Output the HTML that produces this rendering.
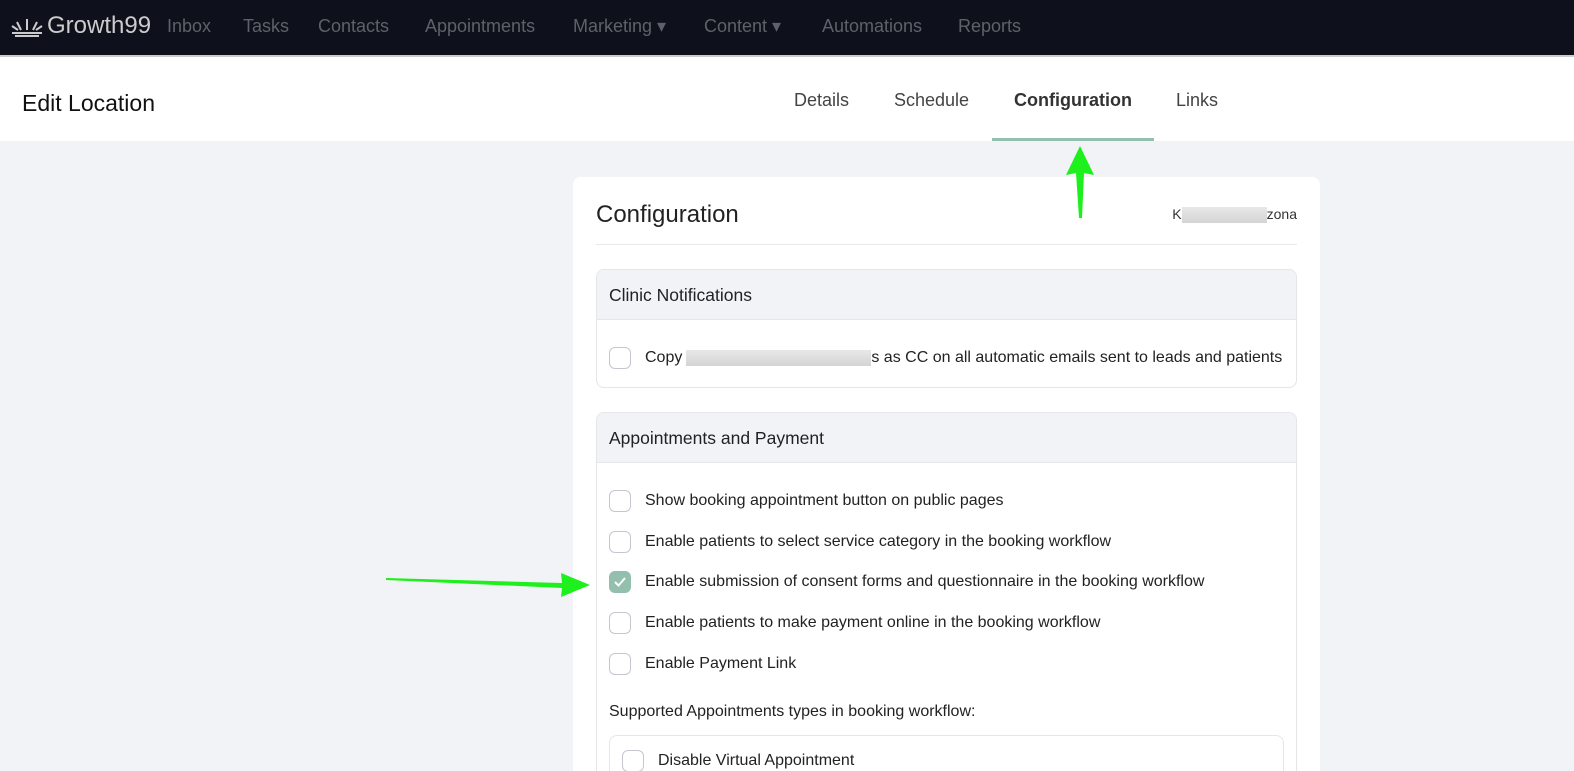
<!DOCTYPE html>
<html><head><meta charset="utf-8"><style>
*{box-sizing:border-box;margin:0;padding:0}
html,body{width:1574px;height:771px;overflow:hidden}
body{background:#f2f3f6;font-family:"Liberation Sans",sans-serif;color:#222;position:relative}
.nav{height:57px;background:#0e111b;position:relative;border-bottom:2px solid #ccc}
.logo{position:absolute;left:10px;top:12px;display:flex;align-items:center;color:#ccc;font-size:24px}
.nav a{position:absolute;top:16px;color:#5d6168;font-size:18px;text-decoration:none}
.hdr{height:84px;background:#fff;position:relative}
.hdr h1{position:absolute;left:22px;top:33px;font-size:23px;font-weight:normal;color:#111}
.tab{position:absolute;top:33px;font-size:18px;color:#444}
.card{position:absolute;left:573px;top:177px;width:747px;height:594px;background:#fff;border-radius:8px 8px 0 0;overflow:hidden}
.title{position:absolute;left:23px;top:24px;font-size:24px;color:#222}
.loc{position:absolute;right:23px;top:29px;font-size:14px;color:#333}
.hr{position:absolute;left:23px;right:23px;top:67px;border-top:1px solid #e8e9ec}
.sec{position:absolute;left:23px;right:23px;border:1px solid #e4e6ea;border-radius:8px;overflow:hidden}
.sh{background:#f2f3f7;height:50px;padding:15px 12px;font-size:17.5px;color:#222;border-bottom:1px solid #e4e6ea}
.row{position:absolute;left:12px;display:flex;align-items:center;font-size:16px;color:#222;white-space:nowrap}
.cb{width:22px;height:22px;border:1.5px solid #c4c7cf;border-radius:6px;margin-right:14px;background:#fff;flex:none}
.cb.on{background:#92bfae;border-color:#92bfae;display:flex;align-items:center;justify-content:center}
.blur{display:inline-block;background:linear-gradient(#e8e8e8,#d4d4d4);height:16px;vertical-align:middle}
</style></head><body>
<div class="nav">
<div class="logo"><svg width="34" height="22" viewBox="0 0 34 22"><g stroke="#ccc" stroke-width="2" fill="none"><path d="M2 18h30M5 21h24"/><path d="M17 15V4M11 15L7 7M23 15l4-8M8 15L2 11M26 15l6-4"/></g></svg><span style="margin-left:3px">Growth99</span></div>
<a style="left:167px">Inbox</a><a style="left:243px">Tasks</a><a style="left:318px">Contacts</a><a style="left:425px">Appointments</a><a style="left:573px">Marketing ▾</a><a style="left:704px">Content ▾</a><a style="left:822px">Automations</a><a style="left:958px">Reports</a>
</div>
<div class="hdr"><h1>Edit Location</h1>
<span class="tab" style="left:794px">Details</span>
<span class="tab" style="left:894px">Schedule</span>
<span class="tab" style="left:1014px;font-weight:bold;color:#333">Configuration</span>
<span class="tab" style="left:1176px">Links</span>
<div style="position:absolute;left:992px;width:162px;top:81px;height:3px;background:#92bfae"></div>
</div>
<div class="card">
<div class="title">Configuration</div>
<div class="loc">K<span class="blur" style="width:85px"></span>zona</div>
<div class="hr"></div>
<div class="sec" style="top:92px;height:119px"><div class="sh">Clinic Notifications</div>
<div class="row" style="top:77px"><div class="cb"></div>Copy <span class="blur" style="width:185px;margin-left:4px"></span>s as CC on all automatic emails sent to leads and patients</div></div>
<div class="sec" style="top:235px;height:359px;border-bottom:none;border-radius:8px 8px 0 0"><div class="sh">Appointments and Payment</div>
<div class="row" style="top:77px"><div class="cb"></div>Show booking appointment button on public pages</div>
<div class="row" style="top:118px"><div class="cb"></div>Enable patients to select service category in the booking workflow</div>
<div class="row" style="top:158px"><div class="cb on"><svg width="14" height="12" viewBox="0 0 14 12"><path d="M2 6l3.5 3.5L12 2" stroke="#fff" stroke-width="2" fill="none"/></svg></div>Enable submission of consent forms and questionnaire in the booking workflow</div>
<div class="row" style="top:199px"><div class="cb"></div>Enable patients to make payment online in the booking workflow</div>
<div class="row" style="top:240px"><div class="cb"></div>Enable Payment Link</div>
<div class="row" style="top:290px">Supported Appointments types in booking workflow:</div>
<div style="position:absolute;left:12px;right:12px;top:322px;height:37px;border:1px solid #e4e6ea;border-bottom:none;border-radius:8px 8px 0 0;overflow:hidden">
<div class="row" style="top:14px"><div class="cb"></div>Disable Virtual Appointment</div></div>
</div>
</div>
<svg style="position:absolute;left:0;top:0" width="1574" height="771"><g fill="#1ef01e">
<polygon points="1080,146 1094,175 1084,173 1082,218 1079,218 1076,173 1066,175"/>
<polygon points="386,578 562,583 561,573 590,585 561,597 562,588 386,580"/></g></svg>
</body></html>
